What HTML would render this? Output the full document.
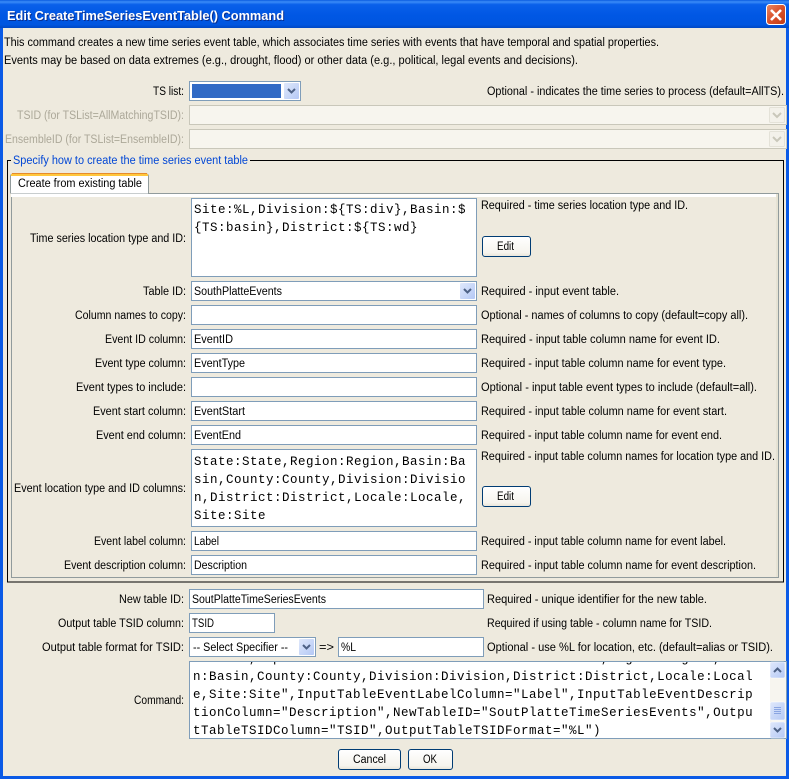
<!DOCTYPE html>
<html><head><meta charset="utf-8"><title>Edit CreateTimeSeriesEventTable() Command</title>
<style>
html,body{margin:0;padding:0;background:#eeeade;overflow:hidden}
svg{display:block}
text{font-family:"Liberation Sans",sans-serif;font-size:11.5px;fill:#000;white-space:pre}
.m{font-family:"Liberation Mono",monospace;font-size:12.5px;letter-spacing:.5px}
.d{fill:#aca899}
.e{text-anchor:end}
.b{fill:#fff;stroke:#7f9db9}
.o{fill:#f7f5ee;stroke:#c9c7ba}
</style></head><body>
<svg width="789" height="779" viewBox="0 0 789 779" xmlns="http://www.w3.org/2000/svg">
<defs>
<linearGradient id="tb" x1="0" y1="0" x2="0" y2="1">
<stop offset="0" stop-color="#0a5be0"/><stop offset=".07" stop-color="#3b8cf8"/><stop offset=".16" stop-color="#0a60ea"/><stop offset=".55" stop-color="#0057e4"/><stop offset=".88" stop-color="#0056e0"/><stop offset="1" stop-color="#0048c4"/>
</linearGradient>
<linearGradient id="cl" x1="0" y1="0" x2="1" y2="1"><stop offset="0" stop-color="#e88a66"/><stop offset=".5" stop-color="#d9502a"/><stop offset="1" stop-color="#c23a12"/></linearGradient>
<linearGradient id="ab" x1="0" y1="0" x2="1" y2="1"><stop offset="0" stop-color="#dfe8fb"/><stop offset="1" stop-color="#b4c8f5"/></linearGradient>
<linearGradient id="btn" x1="0" y1="0" x2="0" y2="1"><stop offset="0" stop-color="#fff"/><stop offset=".8" stop-color="#f6f4ee"/><stop offset="1" stop-color="#e8e4d8"/></linearGradient>
<clipPath id="cc"><rect x="190" y="662" width="580" height="76"/></clipPath>
</defs>

<rect width="789" height="779" fill="#0a5ae6"/>
<rect x="0" y="0" width="789" height="28" fill="url(#tb)"/>
<rect x="3" y="28" width="783" height="748" fill="#eeeade"/>
<text x="8" y="21" style="font-weight:bold;font-size:13px;fill:#0a2f8f" textLength="277" lengthAdjust="spacingAndGlyphs">Edit CreateTimeSeriesEventTable() Command</text>
<text x="7" y="20" style="font-weight:bold;font-size:13px;fill:#fff" textLength="277" lengthAdjust="spacingAndGlyphs">Edit CreateTimeSeriesEventTable() Command</text>
<rect x="766.500" y="4.500" width="19" height="20" rx="3" fill="url(#cl)" stroke="#fff"/>
<path d="M771 10 L781 20 M781 10 L771 20" stroke="#fff" stroke-width="2.600" fill="none"/>

<text x="4" y="46" textLength="655" lengthAdjust="spacingAndGlyphs">This command creates a new time series event table, which associates time series with events that have temporal and spatial properties.</text>
<text x="4" y="64" textLength="574" lengthAdjust="spacingAndGlyphs">Events may be based on data extremes (e.g., drought, flood) or other data (e.g., political, legal events and decisions).</text>

<text x="184" y="95" class="e" textLength="31" lengthAdjust="spacingAndGlyphs">TS list:</text>
<rect x="189.500" y="81.500" width="111" height="19" class="b"/>
<rect x="192" y="84" width="89" height="14" fill="#316ac5"/>
<rect x="284" y="83" width="15" height="16" rx="1" fill="url(#ab)"/>
<path d="M288 89 L291.500 92.500 L295 89" stroke="#4d6185" stroke-width="2" fill="none"/>
<text x="487" y="95" textLength="297" lengthAdjust="spacingAndGlyphs">Optional - indicates the time series to process (default=AllTS).</text>

<text x="184" y="119" class="e d" textLength="167" lengthAdjust="spacingAndGlyphs">TSID (for TSList=AllMatchingTSID):</text>
<rect x="189.500" y="105.500" width="597" height="19" class="o"/>
<rect x="769.500" y="107.500" width="15" height="15" rx="1" fill="#f3f1ea" stroke="#e4e2d8"/>
<path d="M773 113 L777 117 L781 113" stroke="#c9c7ba" stroke-width="2" fill="none"/>
<text x="184" y="143" class="e d" textLength="179" lengthAdjust="spacingAndGlyphs">EnsembleID (for TSList=EnsembleID):</text>
<rect x="189.500" y="129.500" width="597" height="19" class="o"/>
<rect x="769.500" y="131.500" width="15" height="15" rx="1" fill="#f3f1ea" stroke="#e4e2d8"/>
<path d="M773 137 L777 141 L781 137" stroke="#c9c7ba" stroke-width="2" fill="none"/>

<rect x="7.500" y="160.500" width="776" height="421.500" fill="none" stroke="#000"/>
<rect x="11" y="155" width="239" height="10" fill="#eeeade"/>
<text x="13" y="164" style="fill:#0046d5" textLength="235" lengthAdjust="spacingAndGlyphs">Specify how to create the time series event table</text>

<rect x="11.500" y="193.500" width="767" height="384" fill="#fff" stroke="#919b9c"/>
<rect x="12" y="197" width="766" height="380" fill="#eeeade"/>
<rect x="776" y="194" width="2" height="383" fill="#e6e3d4"/>
<path d="M10.500 193.500 V176.500 Q10.500 174 13 174 H146 Q148.500 174 148.500 176.500 V193.500" fill="#fff" stroke="#919b9c"/>
<rect x="11" y="194" width="137" height="3" fill="#fff"/>
<path d="M12 173.500 H147" stroke="#e68b2c"/>
<rect x="11" y="174" width="137" height="2" fill="#ffc73c"/>
<text x="18" y="187" textLength="124" lengthAdjust="spacingAndGlyphs">Create from existing table</text>

<text x="186" y="242" class="e" textLength="156" lengthAdjust="spacingAndGlyphs">Time series location type and ID:</text>
<rect x="191.500" y="198.500" width="285" height="78" class="b"/>
<text x="194" y="213" class="m">Site:%L,Division:${TS:div},Basin:$</text>
<text x="194" y="231" class="m">{TS:basin},District:${TS:wd}</text>
<text x="481" y="209" textLength="207" lengthAdjust="spacingAndGlyphs">Required - time series location type and ID.</text>
<rect x="482.500" y="236.500" width="48" height="20" rx="2.500" fill="url(#btn)" stroke="#003c74"/>
<text x="497" y="250" textLength="17" lengthAdjust="spacingAndGlyphs">Edit</text>

<text x="186" y="295" class="e" textLength="43" lengthAdjust="spacingAndGlyphs">Table ID:</text>
<rect x="191.500" y="281.500" width="285" height="19" class="b"/>
<text x="194" y="295" textLength="88" lengthAdjust="spacingAndGlyphs">SouthPlatteEvents</text>
<rect x="460" y="283" width="15" height="16" rx="1" fill="url(#ab)"/>
<path d="M464 289 L467.500 292.500 L471 289" stroke="#4d6185" stroke-width="2" fill="none"/>
<text x="481" y="295" textLength="138" lengthAdjust="spacingAndGlyphs">Required - input event table.</text>

<text x="186" y="319" class="e" textLength="111" lengthAdjust="spacingAndGlyphs">Column names to copy:</text>
<rect x="191.500" y="305.500" width="285" height="19" class="b"/>
<text x="481" y="319" textLength="267" lengthAdjust="spacingAndGlyphs">Optional - names of columns to copy (default=copy all).</text>

<text x="186" y="343" class="e" textLength="81" lengthAdjust="spacingAndGlyphs">Event ID column:</text>
<rect x="191.500" y="329.500" width="285" height="19" class="b"/>
<text x="194" y="343" textLength="39" lengthAdjust="spacingAndGlyphs">EventID</text>
<text x="481" y="343" textLength="239" lengthAdjust="spacingAndGlyphs">Required - input table column name for event ID.</text>

<text x="186" y="367" class="e" textLength="91" lengthAdjust="spacingAndGlyphs">Event type column:</text>
<rect x="191.500" y="353.500" width="285" height="19" class="b"/>
<text x="194" y="367" textLength="51" lengthAdjust="spacingAndGlyphs">EventType</text>
<text x="481" y="367" textLength="245" lengthAdjust="spacingAndGlyphs">Required - input table column name for event type.</text>

<text x="186" y="391" class="e" textLength="110" lengthAdjust="spacingAndGlyphs">Event types to include:</text>
<rect x="191.500" y="377.500" width="285" height="19" class="b"/>
<text x="481" y="391" textLength="276" lengthAdjust="spacingAndGlyphs">Optional - input table event types to include (default=all).</text>

<text x="186" y="415" class="e" textLength="93" lengthAdjust="spacingAndGlyphs">Event start column:</text>
<rect x="191.500" y="401.500" width="285" height="19" class="b"/>
<text x="194" y="415" textLength="51" lengthAdjust="spacingAndGlyphs">EventStart</text>
<text x="481" y="415" textLength="246" lengthAdjust="spacingAndGlyphs">Required - input table column name for event start.</text>

<text x="186" y="439" class="e" textLength="90" lengthAdjust="spacingAndGlyphs">Event end column:</text>
<rect x="191.500" y="425.500" width="285" height="19" class="b"/>
<text x="194" y="439" textLength="47" lengthAdjust="spacingAndGlyphs">EventEnd</text>
<text x="481" y="439" textLength="241" lengthAdjust="spacingAndGlyphs">Required - input table column name for event end.</text>

<text x="186" y="492" class="e" textLength="172" lengthAdjust="spacingAndGlyphs">Event location type and ID columns:</text>
<rect x="191.500" y="449.500" width="285" height="77" class="b"/>
<text x="194" y="465" class="m">State:State,Region:Region,Basin:Ba</text>
<text x="194" y="483" class="m">sin,County:County,Division:Divisio</text>
<text x="194" y="501" class="m">n,District:District,Locale:Locale,</text>
<text x="194" y="519" class="m">Site:Site</text>
<text x="481" y="460" textLength="294" lengthAdjust="spacingAndGlyphs">Required - input table column names for location type and ID.</text>
<rect x="482.500" y="486.500" width="48" height="20" rx="2.500" fill="url(#btn)" stroke="#003c74"/>
<text x="497" y="500" textLength="17" lengthAdjust="spacingAndGlyphs">Edit</text>

<text x="186" y="545" class="e" textLength="92" lengthAdjust="spacingAndGlyphs">Event label column:</text>
<rect x="191.500" y="531.500" width="285" height="19" class="b"/>
<text x="194" y="545" textLength="25" lengthAdjust="spacingAndGlyphs">Label</text>
<text x="481" y="545" textLength="245" lengthAdjust="spacingAndGlyphs">Required - input table column name for event label.</text>

<text x="186" y="569" class="e" textLength="122" lengthAdjust="spacingAndGlyphs">Event description column:</text>
<rect x="191.500" y="555.500" width="285" height="19" class="b"/>
<text x="194" y="569" textLength="53" lengthAdjust="spacingAndGlyphs">Description</text>
<text x="481" y="569" textLength="275" lengthAdjust="spacingAndGlyphs">Required - input table column name for event description.</text>

<text x="184" y="603" class="e" textLength="65" lengthAdjust="spacingAndGlyphs">New table ID:</text>
<rect x="189.500" y="589.500" width="294" height="19" class="b"/>
<text x="192" y="603" textLength="134" lengthAdjust="spacingAndGlyphs">SoutPlatteTimeSeriesEvents</text>
<text x="487" y="603" textLength="220" lengthAdjust="spacingAndGlyphs">Required - unique identifier for the new table.</text>

<text x="184" y="627" class="e" textLength="126" lengthAdjust="spacingAndGlyphs">Output table TSID column:</text>
<rect x="189.500" y="613.500" width="85" height="19" class="b"/>
<text x="192" y="627" textLength="22" lengthAdjust="spacingAndGlyphs">TSID</text>
<text x="487" y="627" textLength="225" lengthAdjust="spacingAndGlyphs">Required if using table - column name for TSID.</text>

<text x="184" y="651" class="e" textLength="142" lengthAdjust="spacingAndGlyphs">Output table format for TSID:</text>
<rect x="189.500" y="637.500" width="126" height="19" class="b"/>
<text x="193" y="651" textLength="95" lengthAdjust="spacingAndGlyphs">-- Select Specifier --</text>
<rect x="299" y="639" width="15" height="16" rx="1" fill="url(#ab)"/>
<path d="M303 645 L306.500 648.500 L310 645" stroke="#4d6185" stroke-width="2" fill="none"/>
<text x="319" y="651" textLength="15" lengthAdjust="spacingAndGlyphs">=&gt;</text>
<rect x="338.500" y="637.500" width="145" height="19" class="b"/>
<text x="341" y="651" textLength="15" lengthAdjust="spacingAndGlyphs">%L</text>
<text x="487" y="651" textLength="286" lengthAdjust="spacingAndGlyphs">Optional - use %L for location, etc. (default=alias or TSID).</text>

<text x="184" y="704" class="e" textLength="50" lengthAdjust="spacingAndGlyphs">Command:</text>
<rect x="189.500" y="661.500" width="597" height="77" class="b"/>
<g clip-path="url(#cc)">
<text x="193" y="662" class="m">entEnd",InputTableEventLocationColumns="State:State,Region:Region,Basi</text>
<text x="193" y="680" class="m">n:Basin,County:County,Division:Division,District:District,Locale:Local</text>
<text x="193" y="698" class="m">e,Site:Site",InputTableEventLabelColumn="Label",InputTableEventDescrip</text>
<text x="193" y="716" class="m">tionColumn="Description",NewTableID="SoutPlatteTimeSeriesEvents",Outpu</text>
<text x="193" y="734" class="m">tTableTSIDColumn="TSID",OutputTableTSIDFormat="%L")</text>
</g>
<rect x="770" y="662" width="16" height="76" fill="#f7f5ef"/>
<rect x="770" y="662" width="15" height="16" rx="1.500" fill="url(#ab)" stroke="#fff" stroke-width=".5"/>
<path d="M774 672 L777.500 668.500 L781 672" stroke="#4d6185" stroke-width="2" fill="none"/>
<rect x="770" y="702" width="15" height="18" rx="1.500" fill="url(#ab)" stroke="#fff" stroke-width=".5"/>
<path d="M774 707.500 H781 M774 709.500 H781 M774 711.500 H781 M774 713.500 H781" stroke="#8aa5e2" fill="none"/>
<rect x="770" y="722" width="15" height="16" rx="1.500" fill="url(#ab)" stroke="#fff" stroke-width=".5"/>
<path d="M774 728 L777.500 731.500 L781 728" stroke="#4d6185" stroke-width="2" fill="none"/>

<rect x="338.500" y="749.500" width="62" height="20" rx="2.500" fill="url(#btn)" stroke="#003c74"/>
<text x="353" y="763" textLength="33" lengthAdjust="spacingAndGlyphs">Cancel</text>
<rect x="408.500" y="749.500" width="44" height="20" rx="2.500" fill="url(#btn)" stroke="#003c74"/>
<text x="423" y="763" textLength="14" lengthAdjust="spacingAndGlyphs">OK</text>
</svg>
</body></html>
